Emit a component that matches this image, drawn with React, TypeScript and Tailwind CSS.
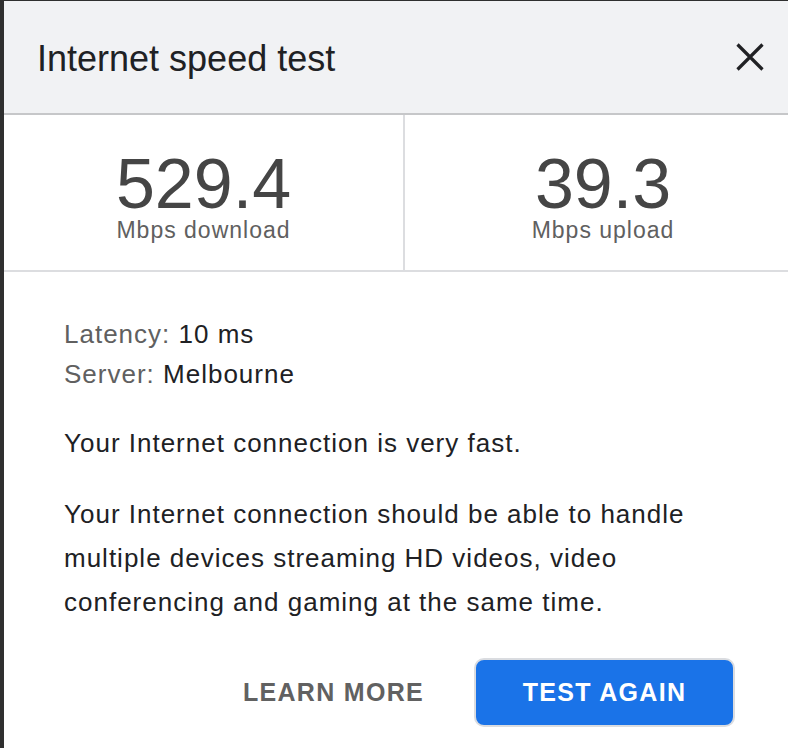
import React from 'react';

function CloseIcon() {
    return (
        <svg width="28" height="28" viewBox="0 0 28 28" fill="none">
            <path d="M1.5 1.5 26.5 26.5 M26.5 1.5 1.5 26.5" stroke="#202124" strokeWidth="3.2" />
        </svg>
    );
}

function Stat({ value, label, className }: { value: string; label: string; className?: string }) {
    return (
        <div className={`flex flex-col items-center h-[155px] pt-[43px] ${className ?? ''}`}>
            <div className="text-[70px] leading-[52px] text-[#454545]">{value}</div>
            <div className="mt-[8px] text-[23px] leading-[24px] tracking-[1px] text-[#606060]">{label}</div>
        </div>
    );
}

export default function App() {
    return (
        <div className="w-[788px] h-[748px] overflow-hidden bg-[#2f2f2f] pt-px pl-[4px] font-[family-name:'Liberation_Sans',Arial,sans-serif]">
            <div className="w-[797px] h-[800px] bg-white">
                <div className="h-[114px] bg-[#f1f2f4] border-b-2 border-[#c6c7c9] flex items-center justify-between pl-[33px] pr-[37px]">
                    <h1 className="text-[36px] leading-[44px] text-[#202124] mt-[3px]">Internet speed test</h1>
                    <button className="mt-[-1px]">
                        <CloseIcon />
                    </button>
                </div>

                <div className="flex border-b-2 border-[#dcdde0]">
                    <Stat value="529.4" label="Mbps download" className="w-[401px] border-r-2 border-[#dcdde0]" />
                    <Stat value="39.3" label="Mbps upload" className="flex-1" />
                </div>

                <div className="px-[60px] pt-[42px] text-[26px] tracking-[1px] text-[#202124]">
                    <div className="leading-[40px]">
                        <div>
                            <span className="text-[#606060]">Latency: </span>10 ms
                        </div>
                        <div>
                            <span className="text-[#606060]">Server: </span>Melbourne
                        </div>
                    </div>
                    <p className="mt-[27px] leading-[44px]">Your Internet connection is very fast.</p>
                    <p className="mt-[27px] leading-[44px]">
                        Your Internet connection should be able to handle multiple devices streaming HD videos, video
                        conferencing and gaming at the same time.
                    </p>
                </div>

                <div className="mt-[34px] flex items-center justify-end pr-[66px]">
                    <button className="mr-[50px] text-[25px] font-bold tracking-[1.3px] text-[#616161]">LEARN MORE</button>
                    <button className="w-[261px] h-[69px] rounded-[10px] border-2 border-[#dadce0] bg-[#1a73e8] text-white text-[25px] font-bold tracking-[1.3px]">
                        TEST AGAIN
                    </button>
                </div>
            </div>
        </div>
    );
}
